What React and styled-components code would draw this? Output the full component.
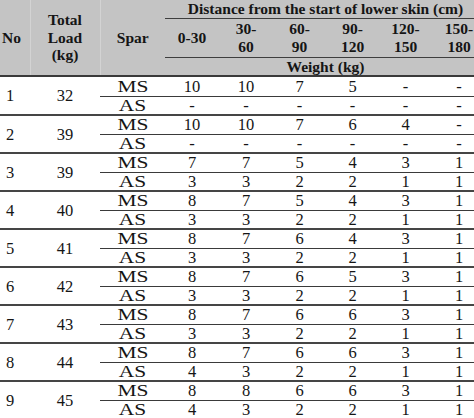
import React from 'react'
import styled, { createGlobalStyle } from 'styled-components'

const Global = createGlobalStyle`
  html, body {
    margin: 0;
    padding: 0;
    background: #ffffff;
    overflow: hidden;
  }
  body {
    width: 474px;
    height: 418px;
  }
`

const Table = styled.table`
  width: 486px;
  table-layout: fixed;
  border-collapse: collapse;
  font-family: "Liberation Serif", "Times New Roman", serif;
  color: #151515;
`

const HeadRow = styled.tr`
  height: ${(p) => p.h}px;
  background: #c4c4c4;
`

const Th = styled.th`
  padding: 0;
  font-size: 15.5px;
  font-weight: bold;
  line-height: 17.5px;
  text-align: ${(p) => (p.left ? 'left' : 'center')};
  padding-left: ${(p) => (p.left ? '2px' : '0')};
  vertical-align: middle;
  border-right: ${(p) => (p.sep ? '1px solid #d3d3d3' : 'none')};
  border-bottom: ${(p) => (p.line ? '1px solid #3e3e3e' : 'none')};
`

const BodyRow = styled.tr`
  height: ${(p) => p.h}px;
`

const HeadEnd = styled.tr`
  height: 0;
  & td {
    padding: 0;
    height: 0;
    border-top: 2px solid #3a3a3a;
  }
`

const Td = styled.td`
  padding: 0;
  font-size: 16.5px;
  line-height: 15px;
  text-align: ${(p) => (p.left ? 'left' : 'center')};
  padding-left: ${(p) => (p.left ? '6px' : '0')};
  vertical-align: middle;
  border-bottom: ${(p) =>
    p.thick ? '2px solid #454545' : p.thin ? '1px solid #3a3a3a' : 'none'};
`

const Spar = styled.span`
  display: inline-block;
  transform: scaleX(1.3);
`

const data = [
  [1, 32, ['10', '10', '7', '5', '-', '-'], ['-', '-', '-', '-', '-', '-']],
  [2, 39, ['10', '10', '7', '6', '4', '-'], ['-', '-', '-', '-', '-', '-']],
  [3, 39, ['7', '7', '5', '4', '3', '1'], ['3', '3', '2', '2', '1', '1']],
  [4, 40, ['8', '7', '5', '4', '3', '1'], ['3', '3', '2', '2', '1', '1']],
  [5, 41, ['8', '7', '6', '4', '3', '1'], ['3', '3', '2', '2', '1', '1']],
  [6, 42, ['8', '7', '6', '5', '3', '1'], ['3', '3', '2', '2', '1', '1']],
  [7, 43, ['8', '7', '6', '6', '3', '1'], ['3', '3', '2', '2', '1', '1']],
  [8, 44, ['8', '7', '6', '6', '3', '1'], ['4', '3', '2', '2', '1', '1']],
  [9, 45, ['8', '8', '6', '6', '3', '1'], ['4', '3', '2', '2', '1', '1']],
]

const ranges = [
  ['0-30'],
  ['30-', '60'],
  ['60-', '90'],
  ['90-', '120'],
  ['120-', '150'],
  ['150-', '180'],
]

const widths = [30, 70, 65, 54, 54, 53, 53, 53, 54]

const App = () => {
  return (
    <>
      <Global />
      <Table>
        <colgroup>
          {widths.map((w, i) => (
            <col key={i} style={{ width: w }} />
          ))}
        </colgroup>
        <thead>
          <HeadRow h={18}>
            <Th rowSpan={3} left sep>No</Th>
            <Th rowSpan={3} sep>Total<br />Load<br />(kg)</Th>
            <Th rowSpan={3}>Spar</Th>
            <Th colSpan={6} line>Distance from the start of lower skin (cm)</Th>
          </HeadRow>
          <HeadRow h={39}>
            {ranges.map((r, i) => (
              <Th key={i} line>
                {r[0]}
                {r[1] && <br />}
                {r[1]}
              </Th>
            ))}
          </HeadRow>
          <HeadRow h={17}>
            <Th colSpan={6}>Weight (kg)</Th>
          </HeadRow>
          <HeadEnd>
            <td colSpan={9} />
          </HeadEnd>
        </thead>
        <tbody>
          {data.map(([no, load, ms, as]) => (
            <React.Fragment key={no}>
              <BodyRow h={19}>
                <Td rowSpan={2} left thick>{no}</Td>
                <Td rowSpan={2} thick>{load}</Td>
                <Td thin><Spar>MS</Spar></Td>
                {ms.map((v, i) => (
                  <Td key={i} thin>{v}</Td>
                ))}
              </BodyRow>
              <BodyRow h={19}>
                <Td thick><Spar>AS</Spar></Td>
                {as.map((v, i) => (
                  <Td key={i} thick>{v}</Td>
                ))}
              </BodyRow>
            </React.Fragment>
          ))}
        </tbody>
      </Table>
    </>
  )
}

export default App
